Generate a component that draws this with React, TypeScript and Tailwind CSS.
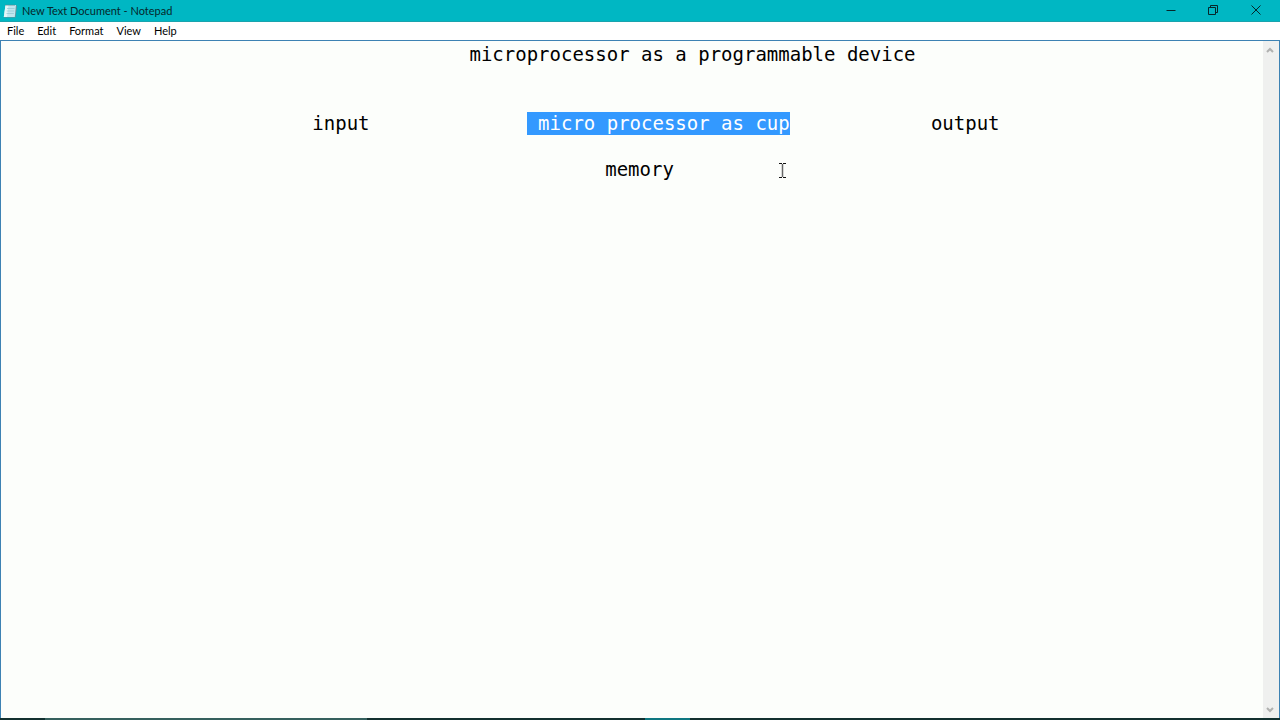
import { useEffect, useRef } from "react";

const MENUS = ["File", "Edit", "Format", "View", "Help"];

const SELECTED = " micro processor as cup";

const TEXT = [
  "\t\t\t\t\t microprocessor as a programmable device",
  "",
  "",
  `\t\t\t   input\t      ${SELECTED}\t\t  output`,
  "",
  "\t\t\t\t\t\t     memory",
].join("\n");

function NotepadIcon() {
  return (
    <svg className="h-4 w-4" viewBox="0 0 16 16" aria-hidden="true">
      <path d="M4 2.5h11l-1.500 12H2z" fill="#6e8f98" />
      <path d="M3.500 2h10.500l-1.200 12H1.800z" fill="#bfe6ef" />
      <path d="M3.500 2h3L5 14H1.800z" fill="#e4f6f8" />
      <path d="M5 5.500h7.500M4.700 8h7.500M4.500 10.500h7.400" stroke="#8fc6d3" strokeWidth="0.7" />
      <path d="M4 1.500v1.500M6 1.500v1.500M8 1.500v1.500M10 1.500v1.500M12 1.500v1.500" stroke="#5f7f86" strokeWidth="0.8" />
    </svg>
  );
}

function TitleBar() {
  return (
    <header className="flex h-[22px] shrink-0 items-center border-b border-[#1aa3ad] bg-[#00b7c3] px-[2px] text-[#06272b]">
      <NotepadIcon />
      <h1 className="ml-1 flex-1 text-[11px] leading-4">New Text Document - Notepad</h1>
      <div className="flex h-full pb-[2px]">
        <button aria-label="Minimize" className="flex w-[42px] items-center justify-center">
          <svg className="h-[10px] w-[10px]" viewBox="0 0 10 10" fill="none" stroke="currentColor">
            <path d="M0.500 5.500h9" />
          </svg>
        </button>
        <button aria-label="Restore" className="flex w-[42px] items-center justify-center">
          <svg className="h-[10px] w-[10px]" viewBox="0 0 10 10" fill="none" stroke="currentColor">
            <path d="M0.500 2.500h7v7h-7zM2.500 2.500v-2h7v7h-2" />
          </svg>
        </button>
        <button aria-label="Close" className="flex w-[44px] items-center justify-center">
          <svg className="h-[10px] w-[10px]" viewBox="0 0 10 10" fill="none" stroke="currentColor">
            <path d="M0.500 0.500l9 9M9.500 0.500l-9 9" />
          </svg>
        </button>
      </div>
    </header>
  );
}

function MenuBar() {
  return (
    <nav className="flex h-[18px] shrink-0 items-center gap-[13px] bg-white pl-[7px] text-[11px] leading-4 text-black">
      {MENUS.map((menu) => (
        <button key={menu}>{menu}</button>
      ))}
    </nav>
  );
}

function ScrollBar() {
  return (
    <div className="flex w-4 shrink-0 flex-col justify-between bg-[#eff0ef] pr-[2px] text-[#b0b1b0]">
      <button aria-label="Scroll up" className="flex h-[18px] items-center justify-center">
        <svg className="h-[6px] w-2" viewBox="0 0 8 6" fill="none" stroke="currentColor" strokeWidth="2">
          <path d="M1 5l3-3 3 3" />
        </svg>
      </button>
      <button aria-label="Scroll down" className="flex h-4 items-center justify-center">
        <svg className="h-[6px] w-2" viewBox="0 0 8 6" fill="none" stroke="currentColor" strokeWidth="2">
          <path d="M1 1l3 3 3-3" />
        </svg>
      </button>
    </div>
  );
}

function Pointer() {
  return (
    <svg
      className="pointer-events-none absolute left-[778px] top-[122px] h-[15px] w-[7px]"
      viewBox="0 0 7 15"
      fill="none"
      aria-hidden="true"
    >
      <path d="M3.500 1v13" stroke="#666" strokeWidth="1.500" />
      <path d="M0 0.500h3M4 0.500h3M0 14.500h3M4 14.500h3" stroke="#111" />
    </svg>
  );
}

function TaskBarEdge() {
  return (
    <div className="flex h-[2px] shrink-0 bg-[#12302f]">
      <div className="w-[45px]" />
      <div className="w-[322px] bg-[#35605d]" />
      <div className="w-[278px]" />
      <div className="w-[45px] bg-[#0e7780]" />
    </div>
  );
}

export default function App() {
  const editor = useRef<HTMLTextAreaElement>(null);

  useEffect(() => {
    const start = TEXT.indexOf(SELECTED);
    editor.current?.focus();
    editor.current?.setSelectionRange(start, start + SELECTED.length);
  }, []);

  return (
    <div className="flex h-screen flex-col bg-white font-[Lato,sans-serif]">
      <TitleBar />
      <MenuBar />
      <main className="relative flex min-h-0 flex-1 border border-b-0 border-[#3d82b3] bg-[#fcfefb]">
        <textarea
          ref={editor}
          aria-label="Document text"
          defaultValue={TEXT}
          spellCheck={false}
          wrap="off"
          className="min-w-0 flex-1 resize-none overflow-hidden bg-transparent pl-[7px] pt-[2px] font-['DejaVu_Sans_Mono',monospace] text-[19px] leading-[23px] text-black outline-none [tab-size:90px] selection:bg-[#3399ff] selection:text-white"
        />
        <ScrollBar />
        <Pointer />
      </main>
      <TaskBarEdge />
    </div>
  );
}
